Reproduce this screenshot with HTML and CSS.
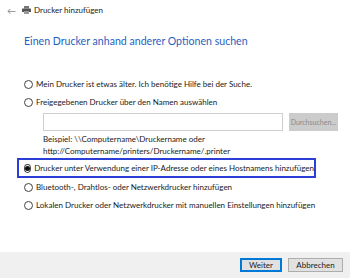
FILE: index.html
```html
<!DOCTYPE html>
<html lang="de">
<head>
    <meta charset="UTF-8">
    <title>Drucker hinzufügen</title>
    <link rel="stylesheet" href="styles.css">
</head>
<body>
    <div class="window">
        <div class="titlebar">
            <span class="back">&larr;</span>
            <svg class="printer" width="9" height="8" viewBox="0 0 9 8">
                <rect x="2" y="0" width="5" height="2.5" fill="#777"/>
                <rect x="0" y="2.5" width="9" height="3.5" rx="0.6" fill="#555"/>
                <rect x="2" y="5" width="5" height="3" fill="#999"/>
            </svg>
            <span class="title">Drucker hinzufügen</span>
        </div>

        <div class="content">
            <h1>Einen Drucker anhand anderer Optionen suchen</h1>

            <div class="options">
                <label class="option"><span class="radio"></span>Mein Drucker ist etwas älter. Ich benötige Hilfe bei der Suche.</label>
                <label class="option"><span class="radio"></span>Freigegebenen Drucker über den Namen auswählen</label>

                <div class="share">
                    <div class="share-row">
                        <div class="textbox"></div>
                        <div class="browse">Durchsuchen...</div>
                    </div>
                    <p class="hint">Beispiel: \\Computername\Druckername oder<br>http://Computername/printers/Druckername/.printer</p>
                </div>

                <label class="option selected"><span class="radio checked"></span>Drucker unter Verwendung einer IP-Adresse oder eines Hostnamens hinzufügen</label>
                <label class="option"><span class="radio"></span>Bluetooth-, Drahtlos- oder Netzwerkdrucker hinzufügen</label>
                <label class="option"><span class="radio"></span>Lokalen Drucker oder Netzwerkdrucker mit manuellen Einstellungen hinzufügen</label>
            </div>
        </div>

        <div class="footer">
            <div class="btn default">Weiter</div>
            <div class="btn">Abbrechen</div>
        </div>
    </div>
</body>
</html>
```

FILE: styles.css
```css
body {
    margin: 0;
    font-family: 'Lato', 'Open Sans', sans-serif;
    font-size: 8px;
    color: #1a1a1a;
    background-color: white;
}
.window {
    width: 350px;
    height: 278px;
    display: flex;
    flex-direction: column;
}
.titlebar {
    height: 20px;
    display: flex;
    align-items: center;
    padding-left: 7px;
}
.back {
    color: #8a8a8a;
    font-size: 9px;
    width: 15px;
}
.printer {
    margin-right: 3px;
}
.title {
    color: #222;
}
.content {
    flex: 1;
    padding-left: 24px;
}
h1 {
    font-size: 10.6px;
    font-weight: normal;
    color: #1f5fbf;
    margin: 15px 0 28px 0;
}
.options {
    display: flex;
    flex-direction: column;
}
.option {
    display: flex;
    align-items: center;
    height: 18px;
    white-space: nowrap;
}
.radio {
    width: 7px;
    height: 7px;
    border: 1px solid #444;
    border-radius: 50%;
    margin-right: 3px;
    box-sizing: content-box;
    display: flex;
    align-items: center;
    justify-content: center;
}
.radio.checked::after {
    content: '';
    width: 5px;
    height: 5px;
    border-radius: 50%;
    background-color: #111;
}
.option.selected {
    border: 2px solid #2b3fd8;
    margin: 1px 0 0 -7px;
    padding-left: 5px;
    width: 290px;
    height: 16px;
}
.share {
    padding-left: 19px;
    margin-top: 2px;
}
.share-row {
    display: flex;
    gap: 6px;
}
.textbox {
    width: 238px;
    height: 16px;
    border: 1px solid #cfcfcf;
}
.browse {
    width: 49px;
    height: 18px;
    background-color: #cccccc;
    color: #8a8a8a;
    font-size: 7px;
    display: flex;
    align-items: center;
    justify-content: center;
}
.hint {
    margin: 2px 0 0 0;
    line-height: 12px;
}
.footer {
    height: 26px;
    background-color: #f0f0f0;
    display: flex;
    align-items: center;
    justify-content: flex-end;
    gap: 6px;
    padding-right: 7px;
}
.btn {
    width: 53px;
    height: 12px;
    border: 1px solid #adadad;
    background-color: #e1e1e1;
    display: flex;
    align-items: center;
    justify-content: center;
    color: #222;
}
.btn.default {
    width: 40px;
    border-color: #0078d7;
    box-shadow: inset 0 0 0 1px #0078d7;
}
```
